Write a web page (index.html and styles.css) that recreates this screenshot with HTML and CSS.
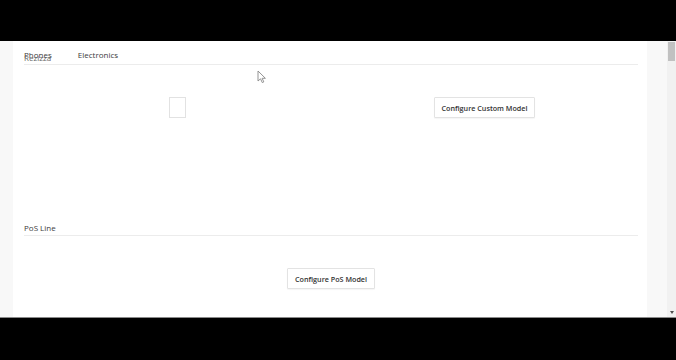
FILE: index.html
```html
<!DOCTYPE html>
<html>
<head>
<meta charset="utf-8">
<link rel="stylesheet" href="styles.css">
</head>
<body>
<div class="screen">
  <div class="topbar"></div>
  <div class="viewport">
    <div class="gutter-left"></div>
    <div class="main">
      <div class="tabs">
        <div class="tab tab-stack"><span>Phones</span><span class="ghost">Rezizza</span></div>
        <div class="tab">Electronics</div>
      </div>
      <div class="split">
        <div class="cell"><div class="placeholder"></div></div>
        <div class="cell"><button class="btn">Configure Custom Model</button></div>
      </div>
      <div class="section-title">PoS Line</div>
      <div class="center-row"><button class="btn">Configure PoS Model</button></div>
      <svg class="cursor" width="10" height="14" viewBox="0 0 10 14"><path d="M1 1 L1 11 L3.5 8.8 L5.3 12.6 L6.8 11.9 L5.1 8.3 L8.4 8.3 Z" fill="#fff" stroke="#888" stroke-width="0.9" stroke-linejoin="round"/></svg>
    </div>
    <div class="gutter-right"></div>
    <div class="scrollbar">
      <div class="thumb"></div>
      <div class="arrow-down"></div>
    </div>
  </div>
  <div class="bottomline"></div>
</div>
</body>
</html>
```
FILE: styles.css
```css
html, body {
  margin: 0;
  padding: 0;
  background: #000;
}
.screen {
  width: 676px;
  height: 360px;
  display: flex;
  flex-direction: column;
  background: #000;
  font-family: "Open Sans", "Noto Sans", sans-serif;
  color: #444;
}
.topbar {
  height: 41px;
  background: #000;
}
.viewport {
  height: 276px;
  display: flex;
  background: #fff;
}
.gutter-left {
  width: 13px;
  background: #f8f8f8;
}
.main {
  position: relative;
  width: 614px;
  padding: 0 9px 0 11px;
  background: #fff;
}
.gutter-right {
  width: 20px;
  background: #f8f8f8;
}
.scrollbar {
  width: 9px;
  background: #f1f1f1;
  display: flex;
  flex-direction: column;
  justify-content: space-between;
  align-items: center;
}
.thumb {
  width: 7px;
  height: 19px;
  margin-top: 1px;
  background: #c1c1c1;
}
.arrow-down {
  width: 0;
  height: 0;
  border-left: 2.5px solid transparent;
  border-right: 2.5px solid transparent;
  border-top: 3px solid #505050;
  margin-bottom: 3px;
}
.bottomline {
  height: 1px;
  background: #8a8a8a;
}
.tabs {
  display: flex;
  gap: 26px;
  height: 24px;
  box-sizing: border-box;
  padding-bottom: 4px;
  border-bottom: 1px solid #ececec;
  align-items: flex-end;
  font-size: 8px;
}
.tab {
  line-height: 10px;
  color: #3c3c3c;
}
.tab-stack {
  position: relative;
}
.ghost {
  position: absolute;
  left: 0;
  top: 3px;
  color: #666;
}
.split {
  display: grid;
  grid-template-columns: 1fr 1fr;
  margin-top: 32px;
  height: 21px;
}
.cell {
  display: flex;
  justify-content: center;
}
.placeholder {
  width: 15px;
  height: 19px;
  border: 1px solid #e2e2e2;
  background: #fff;
}
.btn {
  height: 21px;
  padding: 0 7px;
  border: 1px solid #e3e3e3;
  background: #fff;
  box-shadow: 0 1px 1px rgba(0,0,0,0.04);
  font-family: "Open Sans", "Noto Sans", sans-serif;
  font-size: 7.2px;
  font-weight: 600;
  color: #333;
  border-radius: 1px;
}
.section-title {
  margin-top: 105px;
  font-size: 8px;
  line-height: 10px;
  padding-bottom: 2px;
  border-bottom: 1px solid #ececec;
  color: #3c3c3c;
}
.center-row {
  display: flex;
  justify-content: center;
  margin-top: 32px;
}
.cursor {
  position: absolute;
  left: 244px;
  top: 29px;
}
```
